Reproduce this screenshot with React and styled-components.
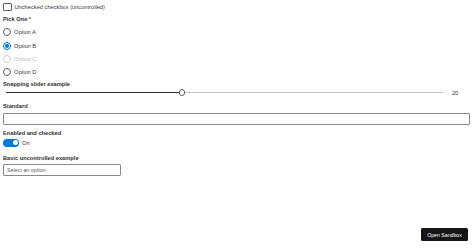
import React from 'react';
import styled, { createGlobalStyle } from 'styled-components';

const GlobalStyle = createGlobalStyle`
  html, body {
    margin: 0;
    padding: 0;
    background: #ffffff;
    font-family: 'Liberation Sans', Arial, sans-serif;
    color: #323130;
  }
`;

const Page = styled.div`
  display: flex;
  flex-direction: column;
  padding: 2px 3px 0 3px;
  width: 474px;
  box-sizing: border-box;
`;

const Row = styled.div`
  display: flex;
  align-items: center;
  height: ${(p) => p.h || 10}px;
  margin-top: ${(p) => p.mt || 0}px;
  gap: 3px;
  font-size: 5.7px;
  color: ${(p) => (p.disabled ? '#c0bebc' : '#3b3a39')};
`;

const Label = styled.div`
  font-size: 5.7px;
  font-weight: 700;
  height: ${(p) => p.h || 10}px;
  line-height: ${(p) => p.h || 10}px;
  margin-top: ${(p) => p.mt || 0}px;
  color: #323130;
  span {
    color: #a4262c;
    margin-left: 1.5px;
  }
`;

const Box = styled.div`
  width: 8.5px;
  height: 8.5px;
  border: 0.8px solid #605e5c;
  border-radius: 1px;
  box-sizing: border-box;
`;

const Circle = styled.div`
  width: 8px;
  height: 8px;
  border-radius: 50%;
  border: 0.8px solid ${(p) => (p.disabled ? '#d2d0ce' : p.checked ? '#0078d4' : '#605e5c')};
  box-sizing: border-box;
  display: flex;
  align-items: center;
  justify-content: center;
  &::after {
    content: '';
    display: ${(p) => (p.checked ? 'block' : 'none')};
    width: 4px;
    height: 4px;
    border-radius: 50%;
    background: #0078d4;
  }
`;

const SliderRow = styled.div`
  display: flex;
  align-items: center;
  height: 8px;
  padding-left: 3px;
  gap: 8px;
`;

const Track = styled.div`
  position: relative;
  width: 438px;
  height: 1.5px;
  background: #c8c6c4;
  border-radius: 1px;
`;

const Fill = styled.div`
  height: 100%;
  background: #323130;
  border-radius: 1px;
`;

const Thumb = styled.div`
  position: absolute;
  top: 50%;
  width: 6.5px;
  height: 6.5px;
  margin: -3.25px 0 0 -3.25px;
  border-radius: 50%;
  border: 0.8px solid #605e5c;
  background: #fff;
  box-sizing: border-box;
`;

const Value = styled.div`
  font-size: 5.6px;
  color: #323130;
`;

const Field = styled.div`
  width: ${(p) => p.w}px;
  height: 12px;
  margin-top: ${(p) => p.mt || 0}px;
  border: 0.8px solid #8a8886;
  border-radius: 1px;
  box-sizing: border-box;
  display: flex;
  align-items: center;
  padding-left: 3px;
  font-size: 5.4px;
  color: #605e5c;
`;

const Toggle = styled.div`
  width: 16px;
  height: 8px;
  border-radius: 4px;
  background: #0078d4;
  display: flex;
  align-items: center;
  justify-content: flex-end;
  padding-right: 1.5px;
  box-sizing: border-box;
  &::after {
    content: '';
    width: 5px;
    height: 5px;
    border-radius: 50%;
    background: #fff;
  }
`;

const SandboxButton = styled.div`
  position: fixed;
  right: 6px;
  bottom: 7px;
  width: 47px;
  height: 13px;
  background: #151515;
  border-radius: 1.5px;
  color: #fff;
  font-size: 5.2px;
  display: flex;
  align-items: center;
  justify-content: center;
`;

const options = ['Option A', 'Option B', 'Option C', 'Option D'];

export default function App() {
  const value = 20;
  const pct = 176 / 438;
  return (
    <>
      <GlobalStyle />
      <Page>
        <Row h={10}>
          <Box />
          Unchecked checkbox (uncontrolled)
        </Row>
        <Label mt={2}>
          Pick One<span>*</span>
        </Label>
        <div style={{ marginTop: 1.5 }}>
          {options.map((o, i) => (
            <Row key={o} h={13.4} disabled={i === 2}>
              <Circle checked={i === 1} disabled={i === 2} />
              {o}
            </Row>
          ))}
        </div>
        <Label h={9} mt={0.5}>Snapping slider example</Label>
        <SliderRow>
          <Track>
            <Fill style={{ width: `${pct * 100}%` }} />
            <Thumb style={{ left: `${pct * 100}%` }} />
          </Track>
          <Value>{value}</Value>
        </SliderRow>
        <Label mt={4}>Standard</Label>
        <Field w={467} mt={2} />
        <Label mt={3}>Enabled and checked</Label>
        <Row h={8} mt={1}>
          <Toggle />
          On
        </Row>
        <Label mt={6}>Basic uncontrolled example</Label>
        <Field w={118} mt={1}>Select an option</Field>
      </Page>
      <SandboxButton>Open Sandbox</SandboxButton>
    </>
  );
}
